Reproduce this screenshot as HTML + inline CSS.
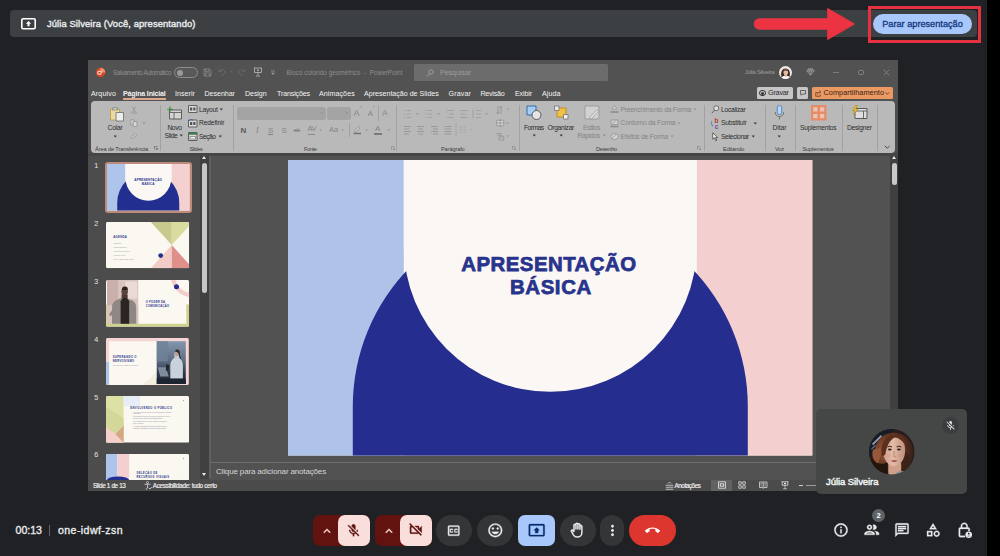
<!DOCTYPE html>
<html lang="pt-BR">
<head>
<meta charset="utf-8">
<title>Meet - apresentando</title>
<style>
*{box-sizing:border-box;margin:0;padding:0}
html,body{width:1000px;height:556px;overflow:hidden;background:#202124}
body{font-family:"Liberation Sans",sans-serif;color:#e8eaed;position:relative}
.abs{position:absolute}
#stage{position:absolute;left:0;top:0;width:1000px;height:556px;background:#202124;overflow:hidden}
svg{display:block;overflow:visible}
/* ---------- Meet top bar ---------- */
#topbar{left:10px;top:10px;width:967px;height:27px;background:#3c4043;border-radius:4px}
#topbar .ttl{left:37px;top:-.5px;height:27px;line-height:27px;font-size:9.4px;color:#e8eaed;white-space:nowrap;-webkit-text-stroke:.4px #e8eaed}
#stopbtn{left:873px;top:13.5px;width:98.5px;height:20.5px;border-radius:10.5px;background:#a8c7fa;color:#062e6f;font-size:9.2px;line-height:20.2px;white-space:nowrap;-webkit-text-stroke:.3px #12377c;color:#12377c}
#redbox{left:867.6px;top:6.4px;width:113.7px;height:37.1px;border:3.1px solid #e63141}
/* ---------- bottom bar ---------- */
.pill{position:absolute;top:514.5px;height:31.5px;background:#333537;border-radius:16px}
.pill svg{position:absolute;left:50%;top:50%}
.grp{position:absolute;top:514.5px;height:31.5px;background:#63130f;border-radius:7px}
.grp .on{position:absolute;right:0;top:0;height:31.5px;width:31.5px;background:#f9dedc;border-radius:7px}
#clock{left:15.6px;top:520px;height:20px;line-height:20px;font-size:10.6px;color:#e8eaed;white-space:nowrap;-webkit-text-stroke:.35px #e8eaed}
/* ---------- self tile ---------- */
#tile{left:815.5px;top:409px;width:151.5px;height:85px;background:#444746;border-radius:5px}
#tile .nm{left:10.5px;top:66.7px;font-size:9.5px;color:#f1f3f4;line-height:12px;white-space:nowrap;-webkit-text-stroke:.45px #f1f3f4}
/* ---------- PowerPoint window ---------- */
#ppt{left:88px;top:60px;width:810px;height:431px;background:#4d4d4d;overflow:hidden;font-family:"Liberation Sans",sans-serif}
.t{white-space:nowrap}
.tab{top:88.600px;font-size:7.100px;color:#f2f2f2;line-height:10px;white-space:nowrap}
.sep{top:104.500px;width:.8px;height:46px;background:#a2a2a2}
.r{font-size:6.700px;color:#2d2d2d;line-height:10px;white-space:nowrap}
.rd{font-size:6.700px;color:#858585;line-height:10px;white-space:nowrap}
.gl{top:144.600px;font-size:5.600px;color:#3c3c3c;line-height:8px;white-space:nowrap}
.lau{top:146px}
.tn{left:94.3px;font-size:7.2px;color:#e4e4e4;line-height:10px}
</style>
</head>
<body>
<div id="stage">

<!-- Meet top bar -->
<div id="topbar" class="abs">
  <svg class="abs" style="left:11.3px;top:8px" width="15" height="11.5" viewBox="0 0 30 23">
    <rect x="1.6" y="1.6" width="26.8" height="19.8" rx="2.5" fill="none" stroke="#fff" stroke-width="3.2"/>
    <path d="M15 6.2 L20.2 11.6 H17 V16.4 H13 V11.6 H9.8 Z" fill="#fff"/>
  </svg>
  <div class="abs ttl" style="letter-spacing:0.104px">Júlia Silveira (Você, apresentando)</div>
</div>

<!-- red arrow annotation -->
<svg class="abs" style="left:750px;top:5px" width="110" height="38" viewBox="0 0 110 38">
  <path d="M9.500 13.200H77.200V2.800L105.300 19 77.200 35.200V24.700H9.500A5.750 5.750 0 0 1 9.500 13.200Z" fill="#eb3342"/>
</svg>
<div id="redbox" class="abs"></div>
<div id="stopbtn" class="abs"><span class="abs" style="left:9.2px;top:0;letter-spacing:-0.006px">Parar apresentação</span></div>

<!-- POWERPOINT WINDOW -->
<div id="ppt" class="abs">
<div class="abs" id="pw" style="left:-88px;top:-60px;width:1000px;height:556px">
<!-- title bar -->
<div class="abs" style="left:88px;top:60px;width:810px;height:41px;background:#525252"></div>
<svg class="abs" style="left:94.5px;top:66.5px" width="11" height="11" viewBox="0 0 22 22"><circle cx="11" cy="11" r="9.5" fill="#d24726"/><path d="M11 1.500A9.500 9.500 0 0 1 20.500 11H11Z" fill="#ff8f6b"/><circle cx="9" cy="11.500" r="4.600" fill="#f4d8cf"/><circle cx="9" cy="11.500" r="2.200" fill="#c23b1c"/></svg>
<div class="abs t" style="left:113px;top:68px;font-size:6.3px;color:#8f8f8f;line-height:9px;letter-spacing:-0.388px">Salvamento Automático</div>
<div class="abs" style="left:174px;top:67px;width:23.5px;height:11px;border-radius:6px;border:1px solid #8c8c8c;background:#595959"></div>
<div class="abs" style="left:176.500px;top:69.500px;width:6px;height:6px;border-radius:50%;background:#9a9a9a"></div>
<!-- quick access icons -->
<svg class="abs" style="left:203px;top:67.500px" width="9" height="9" viewBox="0 0 18 18"><path d="M2 2h11l3 3v11H2z M5 2v5h7V2 M5 16v-6h8v6" fill="none" stroke="#8a8a8a" stroke-width="1.600"/></svg>
<svg class="abs" style="left:218px;top:68px" width="9" height="8" viewBox="0 0 18 16"><path d="M2 2v5h5 M2.500 7C5 3 12 2 14 7c1 4-3 7-7 7" fill="none" stroke="#6e6e6e" stroke-width="1.800"/></svg>
<div class="abs" style="left:229.500px;top:70.500px;width:0;height:0;border-left:1.500px solid transparent;border-right:1.500px solid transparent;border-top:2px solid #6e6e6e"></div>
<svg class="abs" style="left:237px;top:68px" width="9" height="8" viewBox="0 0 18 16"><path d="M16 2v5h-5 M15.500 7C13 3 6 2 4 7c-1 4 3 7 7 7" fill="none" stroke="#6a6a6a" stroke-width="1.800"/></svg>
<svg class="abs" style="left:252.500px;top:67px" width="10" height="10" viewBox="0 0 20 20"><path d="M2 2h16 M3 2v9h14V2 M10 11v5 M6 18h8 M10 4.500v4 M8 6.500h4" fill="none" stroke="#b5b5b5" stroke-width="1.700"/></svg>
<svg class="abs" style="left:269.500px;top:69.500px" width="6" height="6" viewBox="0 0 12 12"><path d="M2 2h8" stroke="#9a9a9a" stroke-width="1.600"/><path d="M2 5.500h8L6 10z" fill="#9a9a9a"/></svg>
<div class="abs t" style="left:286.500px;top:68px;font-size:6.300px;color:#8f8f8f;line-height:9px;letter-spacing:0.056px">Bloco colorido geométrico&nbsp; -&nbsp; PowerPoint</div>
<!-- search -->
<div class="abs" style="left:414px;top:64px;width:194px;height:17px;background:#6c6c6c;border-radius:1.500px"></div>
<svg class="abs" style="left:425.500px;top:68.500px" width="8" height="8" viewBox="0 0 16 16"><circle cx="10" cy="6" r="4.300" fill="none" stroke="#a9a9a9" stroke-width="1.500"/><path d="M7 9.500L1.500 15" stroke="#a9a9a9" stroke-width="1.700"/></svg>
<div class="abs t" style="left:440px;top:67.500px;font-size:7.200px;color:#9c9c9c;line-height:10px;letter-spacing:-0.108px">Pesquisar</div>
<!-- user -->
<div class="abs t" style="left:744.800px;top:68.200px;font-size:6.100px;color:#9c9c9c;line-height:8px;letter-spacing:-0.330px">Júlia Silveira</div>
<svg class="abs" style="left:779px;top:66px" width="13" height="13" viewBox="0 0 26 26"><defs><clipPath id="ta"><circle cx="13" cy="13" r="13"/></clipPath></defs><g clip-path="url(#ta)"><rect width="26" height="26" fill="#efeae6"/><path d="M5 22c-2-8 0-17 8-17s10 8 8 17z" fill="#3b2620"/><ellipse cx="13.500" cy="12.500" rx="4.600" ry="6" fill="#e3bba6"/><path d="M8 11c1-5 9-6 11 0-3-2-7-3-11 0z" fill="#3b2620"/><path d="M4 27c1-6 5-8 9.500-8s8.500 2 9.500 8z" fill="#f7f4f1"/><path d="M11 17h5v4h-5z" fill="#dcb29c"/></g></svg>
<svg class="abs" style="left:806px;top:68px" width="9" height="8" viewBox="0 0 18 16"><path d="M5 1.500h8l3.500 4.500L9 14.500 1.500 6z M1.500 6h15 M6.500 6L9 14 M11.500 6L9 14 M5 1.500L6.500 6 9 1.500 11.500 6 13 1.500" fill="none" stroke="#a9a9a9" stroke-width="1.300"/></svg>
<div class="abs" style="left:832.500px;top:72px;width:6px;height:1px;background:#7c7c7c"></div>
<div class="abs" style="left:858px;top:69.500px;width:5.500px;height:5.500px;border:1px solid #858585;border-radius:1.500px"></div>
<svg class="abs" style="left:882.500px;top:69px" width="7" height="7" viewBox="0 0 14 14"><path d="M1.500 1.500l11 11M12.500 1.500l-11 11" stroke="#8e8e8e" stroke-width="1.500"/></svg>
<!-- tabs -->
<div class="abs tab" style="left:91px;letter-spacing:0.134px">Arquivo</div>
<div class="abs tab" style="left:123px;font-weight:bold;letter-spacing:-0.196px">Página Inicial</div>
<div class="abs" style="left:123px;top:98.200px;width:43px;height:1.500px;background:#dba88f"></div>
<div class="abs tab" style="left:175px;letter-spacing:0.040px">Inserir</div>
<div class="abs tab" style="left:204.500px;letter-spacing:-0.046px">Desenhar</div>
<div class="abs tab" style="left:245px;letter-spacing:-0.082px">Design</div>
<div class="abs tab" style="left:277px;letter-spacing:-0.144px">Transições</div>
<div class="abs tab" style="left:319px;letter-spacing:0.078px">Animações</div>
<div class="abs tab" style="left:364px;letter-spacing:-0.006px">Apresentação de Slides</div>
<div class="abs tab" style="left:448.500px;letter-spacing:0.152px">Gravar</div>
<div class="abs tab" style="left:480.500px;letter-spacing:-0.249px">Revisão</div>
<div class="abs tab" style="left:515px;letter-spacing:-0.125px">Exibir</div>
<div class="abs tab" style="left:542px;letter-spacing:0.069px">Ajuda</div>
<!-- right buttons -->
<div class="abs" style="left:757px;top:87px;width:35.500px;height:12px;background:#c6c6c6;border-radius:1.500px"></div>
<div class="abs" style="left:759.200px;top:89.600px;width:6.800px;height:6.800px;border-radius:50%;border:.9px solid #333"></div>
<div class="abs" style="left:761.100px;top:91.500px;width:3px;height:3px;border-radius:50%;background:#333"></div>
<div class="abs t" style="left:768px;top:88px;font-size:7.300px;color:#2a2a2a;line-height:10px;letter-spacing:-0.252px">Gravar</div>
<div class="abs" style="left:797px;top:87px;width:11px;height:12px;background:#c6c6c6;border-radius:1.500px"></div>
<svg class="abs" style="left:799.500px;top:90px" width="6" height="6" viewBox="0 0 12 12"><path d="M1 1h10v7H5l-2.500 2.500V8H1z" fill="none" stroke="#333" stroke-width="1.300"/></svg>
<div class="abs" style="left:812px;top:87px;width:80.500px;height:12px;background:#ea9963;border-radius:1.500px"></div>
<svg class="abs" style="left:815px;top:89.500px" width="7" height="7" viewBox="0 0 14 14"><path d="M5 5H1.500v7.500h9V9 M5 9c0-3 2-5 6-5 M8.500 1.500L11.500 4 8.500 6.500" fill="none" stroke="#4a2a18" stroke-width="1.300"/></svg>
<div class="abs t" style="left:823.500px;top:88px;font-size:7.300px;color:#3a2214;line-height:10px;letter-spacing:0.055px">Compartilhamento</div>
<svg class="abs" style="left:885px;top:91.500px" width="4.500" height="3" viewBox="0 0 9 6"><path d="M1 1l3.500 3.500L8 1" fill="none" stroke="#4a2a18" stroke-width="1.400"/></svg>
<div class="abs" style="left:91px;top:101px;width:803.500px;height:52px;background:#b9b9b9;border-radius:4px"></div>
<!-- group separators -->
<div class="abs sep" style="left:159.500px"></div><div class="abs sep" style="left:232.500px"></div><div class="abs sep" style="left:396.200px"></div><div class="abs sep" style="left:518.500px"></div><div class="abs sep" style="left:703.500px"></div><div class="abs sep" style="left:764.500px"></div><div class="abs sep" style="left:794.500px"></div><div class="abs sep" style="left:841.500px"></div><div class="abs sep" style="left:877px"></div>
<!-- clipboard -->
<svg class="abs" style="left:108.500px;top:105.500px" width="16" height="16" viewBox="0 0 32 32"><path d="M3 6h18v22H3z" fill="#e9dba6" stroke="#b59a3c" stroke-width="1.600"/><path d="M8 3.500h8l1.500 4.500h-11z" fill="#d8d8d8" stroke="#6e6e6e" stroke-width="1.400"/><path d="M14 13h15v17H14z" fill="#ededed" stroke="#6a6a6a" stroke-width="1.600"/></svg>
<div class="abs r" style="left:107.600px;top:122.9px;letter-spacing:-0.237px">Colar</div>
<svg class="abs" style="left:113px;top:134.500px" width="4.500" height="3" viewBox="0 0 9 6"><path d="M1.200 1.200h6.600L4.500 5z" fill="#3a3a3a"/></svg>
<svg class="abs" style="left:130.500px;top:105.500px" width="6" height="8" viewBox="0 0 12 16"><path d="M2.500 1l6.500 11M9.500 1L3 12" stroke="#8d8d8d" stroke-width="1.300"/><circle cx="3" cy="13.500" r="1.800" fill="none" stroke="#8d8d8d" stroke-width="1.100"/><circle cx="9" cy="13.500" r="1.800" fill="none" stroke="#8d8d8d" stroke-width="1.100"/></svg>
<svg class="abs" style="left:130px;top:118.500px" width="8" height="8" viewBox="0 0 16 16"><path d="M1.500 1.500h7v10h-7z" fill="#cfcfcf" stroke="#8a8a8a" stroke-width="1.300"/><path d="M6.500 5h7.500v10H6.500z" fill="#d6d6d6" stroke="#8a8a8a" stroke-width="1.300"/></svg>
<svg class="abs" style="left:141.500px;top:122px" width="4" height="2.500" viewBox="0 0 8 5"><path d="M1 1h6L4 4.400z" fill="#8d8d8d"/></svg>
<svg class="abs" style="left:130px;top:132px" width="8" height="8" viewBox="0 0 16 16"><path d="M9 2l5 4-4 3-4-4z M6 6l-4.500 6 2.500 2 5-5" fill="#c8c8c8" stroke="#919191" stroke-width="1.300"/></svg>
<div class="abs gl" style="left:95px;letter-spacing:-0.097px">Área de Transferência</div>
<svg class="abs lau" style="left:153.500px"  width="4" height="4" viewBox="0 0 8 8"><path d="M1 7V1h6 M3.500 3.500L7 7 M7 4v3H4" fill="none" stroke="#555" stroke-width="1.100"/></svg>
<!-- slides -->
<svg class="abs" style="left:166.500px;top:105.500px" width="16" height="14" viewBox="0 0 32 28"><path d="M5 8h24v18H5z" fill="#d4d4d4" stroke="#5f5f5f" stroke-width="2"/><path d="M5 13h24 M14 13v13" stroke="#5f5f5f" stroke-width="1.800"/><path d="M6 1v11 M.5 6.500h11" stroke="#2f8a3a" stroke-width="2"/></svg>
<div class="abs r" style="left:167.400px;top:122.9px;letter-spacing:-0.356px">Novo</div>
<div class="abs r" style="left:164.600px;top:130.8px;letter-spacing:-0.415px">Slide</div>
<svg class="abs" style="left:179px;top:134px" width="4.500" height="3" viewBox="0 0 9 6"><path d="M1.200 1.200h6.600L4.500 5z" fill="#3a3a3a"/></svg>
<svg class="abs" style="left:188px;top:105px" width="9.500" height="8" viewBox="0 0 19 16"><path d="M1 1h17v14H1z" fill="#dcdcdc" stroke="#555" stroke-width="1.800"/><path d="M4 5h4.500v6H4z M10.500 5H15v6h-4.500z" fill="#555"/></svg>
<div class="abs r" style="left:199px;top:105.1px;letter-spacing:-0.249px">Layout</div>
<svg class="abs" style="left:219px;top:108px" width="4.500" height="3" viewBox="0 0 9 6"><path d="M1.200 1.200h6.600L4.500 5z" fill="#3a3a3a"/></svg>
<svg class="abs" style="left:188px;top:118.500px" width="9.500" height="8.500" viewBox="0 0 19 17"><path d="M1 2h17v14H1z" fill="#dcdcdc" stroke="#555" stroke-width="1.800"/><path d="M4 6h4.500v6H4z M10.500 6H15v6h-4.500z" fill="#555"/><path d="M1 5C3 1 8 0 10 3" fill="none" stroke="#2a62a8" stroke-width="1.800"/></svg>
<div class="abs r" style="left:199px;top:118.4px;letter-spacing:-0.152px">Redefinir</div>
<svg class="abs" style="left:188px;top:131.500px" width="9.500" height="9" viewBox="0 0 19 18"><path d="M1 1h17v16H1z" fill="#dcdcdc" stroke="#4f4f4f" stroke-width="1.800"/><path d="M1 1h17v4.500H1z" fill="#3f7d4a"/><path d="M4 9h11v5H4z" fill="#f4f4f4" stroke="#555" stroke-width="1.200"/></svg>
<div class="abs r" style="left:199px;top:131.9px;letter-spacing:-0.514px">Seção</div>
<svg class="abs" style="left:217.500px;top:134.500px" width="4.500" height="3" viewBox="0 0 9 6"><path d="M1.200 1.200h6.600L4.500 5z" fill="#3a3a3a"/></svg>
<div class="abs gl" style="left:189.400px;letter-spacing:-0.342px">Slides</div>
<!-- font -->
<div class="abs" style="left:237px;top:107px;width:88.500px;height:12.500px;background:#a4a4a4;border-radius:2.500px"></div>
<div class="abs" style="left:327px;top:107px;width:23.500px;height:12.500px;background:#a4a4a4;border-radius:2.500px"></div>
<svg class="abs" style="left:320px;top:112px" width="3.500" height="2.500" viewBox="0 0 7 5"><path d="M.8 1h5.400L3.500 4.200z" fill="#8e8e8e"/></svg>
<svg class="abs" style="left:345px;top:112px" width="3.500" height="2.500" viewBox="0 0 7 5"><path d="M.8 1h5.400L3.500 4.200z" fill="#8e8e8e"/></svg>
<div class="abs rd" style="left:353.500px;top:107.500px;font-size:9px;line-height:11px">A</div><div class="abs rd" style="left:359.800px;top:105.500px;font-size:4.500px;line-height:6px">^</div>
<div class="abs rd" style="left:367.800px;top:108.500px;font-size:7.800px;line-height:10px">A</div><div class="abs rd" style="left:373px;top:106px;font-size:4.500px;line-height:6px">ˇ</div>
<div class="abs" style="left:378.200px;top:106px;width:.8px;height:15px;background:#a0a0a0"></div>
<div class="abs rd" style="left:382px;top:107.500px;font-size:8.500px;line-height:11px">A</div><svg class="abs" style="left:386px;top:113px" width="4" height="4" viewBox="0 0 8 8"><path d="M1 5l4-4 2.500 2.500-4 4z" fill="#d0d0d0" stroke="#8a8a8a" stroke-width="1"/></svg>
<div class="abs" style="left:240.500px;top:124.500px;font-size:8px;font-weight:bold;color:#5a5a5a;line-height:11px">N</div>
<div class="abs rd" style="left:256px;top:124.500px;font-size:8px;font-style:italic;font-family:'Liberation Serif',serif;line-height:11px">I</div>
<div class="abs rd" style="left:268px;top:124.500px;font-size:8px;text-decoration:underline;line-height:11px">S</div>
<div class="abs rd" style="left:281.500px;top:124.500px;font-size:8px;line-height:11px">S</div>
<div class="abs rd" style="left:293.500px;top:126px;font-size:6px;text-decoration:line-through;line-height:9px">ab</div>
<div class="abs rd" style="left:307.500px;top:124px;font-size:7.500px;line-height:10px;letter-spacing:-.5px">AV</div><div class="abs" style="left:308px;top:134px;width:7px;height:.8px;background:#8a8a8a"></div>
<svg class="abs" style="left:318.500px;top:129px" width="3.500" height="2.500" viewBox="0 0 7 5"><path d="M.8 1h5.400L3.500 4.200z" fill="#8e8e8e"/></svg>
<div class="abs rd" style="left:329px;top:125px;font-size:7.500px;line-height:10px">Aa</div>
<svg class="abs" style="left:340.500px;top:129px" width="3.500" height="2.500" viewBox="0 0 7 5"><path d="M.8 1h5.400L3.500 4.200z" fill="#8e8e8e"/></svg>
<div class="abs" style="left:349.200px;top:123px;width:.8px;height:14px;background:#a0a0a0"></div>
<svg class="abs" style="left:352.500px;top:124.500px" width="8.500" height="9.500" viewBox="0 0 17 19"><path d="M4 11l7-8 3 2.500-7 8-3.500.5z" fill="#cfcfcf" stroke="#7e7e7e" stroke-width="1.300"/><path d="M1 17h15" stroke="#6e6e6e" stroke-width="2.600"/></svg>
<svg class="abs" style="left:364.500px;top:129px" width="3.500" height="2.500" viewBox="0 0 7 5"><path d="M.8 1h5.400L3.500 4.200z" fill="#8e8e8e"/></svg>
<div class="abs rd" style="left:375px;top:123.500px;font-size:8px;line-height:10px">A</div><div class="abs" style="left:373.500px;top:133px;width:8.500px;height:1.600px;background:#7a7a7a"></div>
<svg class="abs" style="left:386.500px;top:129px" width="3.500" height="2.500" viewBox="0 0 7 5"><path d="M.8 1h5.400L3.500 4.200z" fill="#8e8e8e"/></svg>
<div class="abs gl" style="left:304px;letter-spacing:-0.343px">Fonte</div>
<svg class="abs lau" style="left:390.500px" width="4" height="4" viewBox="0 0 8 8"><path d="M1 7V1h6 M3.500 3.500L7 7 M7 4v3H4" fill="none" stroke="#7a7a7a" stroke-width="1.100"/></svg>
<!-- paragraph -->
<svg class="abs" style="left:403px;top:108.500px" width="90" height="10" viewBox="0 0 180 20">
 <g stroke="#9a9a9a" stroke-width="1.500" fill="none"><path d="M2 3h2M7 3h9M2 10h2M7 10h9M2 17h2M7 17h9"/><path d="M44 3h2M49 3h9M44 10h2M49 10h9M44 17h2M49 17h9"/><path d="M88 3h14M92 10h10M88 17h14"/><path d="M115 3h14M115 10h10M115 17h14"/><path d="M140 1v18M146 3h10M146 10h10M146 17h10"/></g>
 <g stroke="#8e8e8e" stroke-width="1.400" fill="none"><path d="M26 8l3 3 3-3M68 8l3 3 3-3M164 8l3 3 3-3"/></g>
</svg>
<svg class="abs" style="left:403px;top:125px" width="75" height="10" viewBox="0 0 150 20">
 <g stroke="#8f8f8f" stroke-width="1.500" fill="none"><path d="M2 3h14M2 8h10M2 13h14M2 18h10"/><path d="M28 3h14M30 8h10M28 13h14M30 18h10"/><path d="M56 3h14M60 8h10M56 13h14M60 18h10"/><path d="M83 3h14M83 8h14M83 13h14M83 18h14"/></g>
 <path d="M106 -4v28" stroke="#9a9a9a" stroke-width="1.300"/>
 <g stroke="#a3a3a3" stroke-width="1.400" fill="none"><path d="M113 4h5M113 9h5M113 14h5M121 4h5M121 9h5M121 14h5"/><path d="M133 8l3 3 3-3"/></g>
</svg>
<svg class="abs" style="left:496px;top:104.500px" width="7" height="10" viewBox="0 0 14 20"><path d="M4 2v15M1.500 14L4 17.500 6.500 14 M10 18V3 M7.500 6L10 2.500 12.500 6" fill="none" stroke="#8a8a8a" stroke-width="1.400"/></svg>
<svg class="abs" style="left:495.500px;top:119px" width="8.500" height="8" viewBox="0 0 17 16"><path d="M1.500 2.500h14v11h-14z M8.500 0v16 M1.500 8h14" fill="#d2d2d2" stroke="#8a8a8a" stroke-width="1.400"/></svg>
<svg class="abs" style="left:495.500px;top:131.500px" width="8.500" height="8.500" viewBox="0 0 17 17"><path d="M1 3h8l2 2M3 6.500h8l2 2 M6 9.500h9.500v6.500H6z" fill="none" stroke="#8a8a8a" stroke-width="1.400"/></svg>
<svg class="abs" style="left:506px;top:108px" width="3.500" height="2.500" viewBox="0 0 7 5"><path d="M.8 1h5.400L3.500 4.200z" fill="#8e8e8e"/></svg>
<svg class="abs" style="left:506px;top:122px" width="3.500" height="2.500" viewBox="0 0 7 5"><path d="M.8 1h5.400L3.500 4.200z" fill="#8e8e8e"/></svg>
<svg class="abs" style="left:506px;top:135px" width="3.500" height="2.500" viewBox="0 0 7 5"><path d="M.8 1h5.400L3.500 4.200z" fill="#8e8e8e"/></svg>
<div class="abs gl" style="left:441px;letter-spacing:-0.109px">Parágrafo</div>
<svg class="abs lau" style="left:512px" width="4" height="4" viewBox="0 0 8 8"><path d="M1 7V1h6 M3.500 3.500L7 7 M7 4v3H4" fill="none" stroke="#7a7a7a" stroke-width="1.100"/></svg>
<!-- drawing -->
<svg class="abs" style="left:525.500px;top:105px" width="16" height="16" viewBox="0 0 32 32"><path d="M2 2h18v18H2z" fill="#a9cdf2" stroke="#2f6fb5" stroke-width="2"/><circle cx="21" cy="20" r="9" fill="#e4e4e4" stroke="#5a5a5a" stroke-width="2"/></svg>
<div class="abs r" style="left:524px;top:122.9px;letter-spacing:-0.512px">Formas</div>
<svg class="abs" style="left:531.500px;top:134px" width="4.500" height="3" viewBox="0 0 9 6"><path d="M1.200 1.200h6.600L4.500 5z" fill="#3a3a3a"/></svg>
<svg class="abs" style="left:552.500px;top:105px" width="16" height="16" viewBox="0 0 32 32"><path d="M8 6h18v18H8z" fill="#f2c14a" stroke="#c08d1a" stroke-width="2"/><path d="M3 2h9v9H3z" fill="#eaeaea" stroke="#7b7b7b" stroke-width="1.800"/><path d="M21 19h9v9h-9z" fill="#f2f2f2" stroke="#7b7b7b" stroke-width="1.800"/></svg>
<div class="abs r" style="left:547.400px;top:122.9px;letter-spacing:-0.308px">Organizar</div>
<svg class="abs" style="left:558.500px;top:134px" width="4.500" height="3" viewBox="0 0 9 6"><path d="M1.200 1.200h6.600L4.500 5z" fill="#3a3a3a"/></svg>
<svg class="abs" style="left:583.500px;top:105px" width="17" height="16" viewBox="0 0 34 32"><path d="M2 2h28v26H2z" fill="#d2d2d2" stroke="#9d9d9d" stroke-width="2"/><path d="M12 24l14-15 3 3-14 15-4 1z" fill="#e6e6e6" stroke="#9a9a9a" stroke-width="1.600"/></svg>
<div class="abs rd" style="left:583px;top:122.9px;letter-spacing:-0.386px">Estilos</div>
<div class="abs rd" style="left:577.600px;top:130.8px;letter-spacing:-0.307px">Rápidos</div>
<svg class="abs" style="left:601.500px;top:134px" width="4.500" height="3" viewBox="0 0 9 6"><path d="M1.200 1.200h6.600L4.500 5z" fill="#8e8e8e"/></svg>
<svg class="abs" style="left:610px;top:105px" width="9" height="9" viewBox="0 0 18 18"><path d="M9 1l5 7H4z" fill="#d6d6d6" stroke="#8a8a8a" stroke-width="1.300"/><path d="M1 14h16" stroke="#8a8a8a" stroke-width="3"/></svg>
<div class="abs rd" style="left:620.600px;top:105.1px;letter-spacing:-0.230px">Preenchimento da Forma</div>
<svg class="abs" style="left:692.500px;top:108px" width="4" height="2.800" viewBox="0 0 8 5.600"><path d="M1 1h6L4 4.600z" fill="#8e8e8e"/></svg>
<svg class="abs" style="left:610px;top:118.500px" width="9" height="9" viewBox="0 0 18 18"><path d="M2 2h14v9H2z" fill="#d0d0d0" stroke="#8a8a8a" stroke-width="1.400"/><path d="M5 9l6-5" stroke="#8a8a8a" stroke-width="1.300"/><path d="M1 15h16" stroke="#8a8a8a" stroke-width="3"/></svg>
<div class="abs rd" style="left:620.600px;top:118.4px;letter-spacing:-0.188px">Contorno da Forma</div>
<svg class="abs" style="left:676.500px;top:121.500px" width="4" height="2.800" viewBox="0 0 8 5.600"><path d="M1 1h6L4 4.600z" fill="#8e8e8e"/></svg>
<svg class="abs" style="left:610px;top:131.500px" width="9" height="9" viewBox="0 0 18 18"><ellipse cx="9" cy="9" rx="7.500" ry="6" fill="#d2d2d2" stroke="#8a8a8a" stroke-width="1.400"/><path d="M4 12l8-7" stroke="#8a8a8a" stroke-width="1.300"/></svg>
<div class="abs rd" style="left:620.600px;top:131.9px;letter-spacing:-0.220px">Efeitos de Forma</div>
<svg class="abs" style="left:669.500px;top:134.500px" width="4" height="2.800" viewBox="0 0 8 5.600"><path d="M1 1h6L4 4.600z" fill="#8e8e8e"/></svg>
<div class="abs gl" style="left:596px;letter-spacing:-0.201px">Desenho</div>
<svg class="abs lau" style="left:697px" width="4" height="4" viewBox="0 0 8 8"><path d="M1 7V1h6 M3.500 3.500L7 7 M7 4v3H4" fill="none" stroke="#7a7a7a" stroke-width="1.100"/></svg>
<!-- editing -->
<svg class="abs" style="left:710.500px;top:105px" width="8.500" height="9" viewBox="0 0 17 18"><circle cx="10.500" cy="6.500" r="5" fill="#e0e0e0" stroke="#4a4a4a" stroke-width="1.500"/><path d="M7 10.500L1.500 16.500" stroke="#7a4a9a" stroke-width="2"/></svg>
<div class="abs r" style="left:721px;top:105.1px;letter-spacing:-0.263px">Localizar</div>
<svg class="abs" style="left:710px;top:118px" width="9.500" height="10" viewBox="0 0 19 20"><path d="M4 6C2 9 2 13 5 15.500" fill="none" stroke="#3a72b8" stroke-width="1.600"/><path d="M3 16.500l3.500-.5-1-3z" fill="#3a72b8"/></svg>
<div class="abs" style="left:714.500px;top:116.500px;font-size:6.500px;line-height:7px;color:#c0392b;font-weight:bold">b</div>
<div class="abs" style="left:714.800px;top:122.800px;font-size:6.500px;line-height:7px;color:#7a4a9a;font-weight:bold">c</div>
<div class="abs r" style="left:721px;top:118.4px;letter-spacing:-0.229px">Substituir</div>
<svg class="abs" style="left:753px;top:121.500px" width="4.500" height="3" viewBox="0 0 9 6"><path d="M1.200 1.200h6.600L4.500 5z" fill="#3a3a3a"/></svg>
<svg class="abs" style="left:711.500px;top:131.500px" width="6.500" height="9.500" viewBox="0 0 13 19"><path d="M1.500 1.500v13l3.500-3 2.500 6 2-1-2.500-5.500h4.500z" fill="#f0f0f0" stroke="#3f3f3f" stroke-width="1.500"/></svg>
<div class="abs r" style="left:721px;top:131.9px;letter-spacing:-0.361px">Selecionar</div>
<svg class="abs" style="left:751px;top:134.500px" width="4.500" height="3" viewBox="0 0 9 6"><path d="M1.200 1.200h6.600L4.500 5z" fill="#3a3a3a"/></svg>
<div class="abs gl" style="left:723px;letter-spacing:-0.087px">Editando</div>
<!-- voice -->
<svg class="abs" style="left:774px;top:105px" width="11" height="16" viewBox="0 0 22 32"><rect x="6.500" y="1" width="9" height="18" rx="4.500" fill="#b5d5f5" stroke="#3f79bd" stroke-width="1.600"/><path d="M2.500 14c0 6 3.500 9 8.500 9s8.500-3 8.500-9 M11 23v6" fill="none" stroke="#6d6d6d" stroke-width="1.800"/></svg>
<div class="abs r" style="left:772.600px;top:122.9px;letter-spacing:-0.085px">Ditar</div>
<svg class="abs" style="left:777.300px;top:134.500px" width="4.500" height="3" viewBox="0 0 9 6"><path d="M1.200 1.200h6.600L4.500 5z" fill="#3a3a3a"/></svg>
<div class="abs gl" style="left:775px;letter-spacing:-0.115px">Voz</div>
<!-- add-ins -->
<svg class="abs" style="left:810.500px;top:105px" width="15.500" height="15.500" viewBox="0 0 31 31"><rect x="0" y="0" width="31" height="31" fill="#e58d69"/><rect x="4.500" y="4.500" width="8.500" height="8.500" fill="#ecc4b3"/><rect x="18" y="4.500" width="8.500" height="8.500" fill="#ecc4b3"/><rect x="4.500" y="18" width="8.500" height="8.500" fill="#ecc4b3"/><rect x="18" y="18" width="8.500" height="8.500" fill="#ecc4b3"/></svg>
<div class="abs r" style="left:800px;top:122.9px;letter-spacing:-0.241px">Suplementos</div>
<div class="abs gl" style="left:802.500px;letter-spacing:-0.123px">Suplementos</div>
<!-- designer -->
<svg class="abs" style="left:850.500px;top:104.500px" width="17" height="16" viewBox="0 0 34 32"><path d="M8 7h24v20H8z" fill="#dedede" stroke="#5a5a5a" stroke-width="2"/><path d="M8 12h24 M25 12v15" stroke="#5a5a5a" stroke-width="1.800"/><path d="M9 1l-6 10h5l-3 9 9-12H9l4-7z" fill="#f0c63c" stroke="#a88512" stroke-width="1.200"/></svg>
<div class="abs r" style="left:846.900px;top:122.9px;letter-spacing:-0.246px">Designer</div>
<svg class="abs" style="left:883.500px;top:144.500px" width="6.500" height="4" viewBox="0 0 13 8"><path d="M1.500 1.500l5 5 5-5" fill="none" stroke="#3a3a3a" stroke-width="1.700"/></svg>

<!-- body backgrounds -->
<div class="abs" style="left:88px;top:153px;width:810px;height:339px;background:#4c4c4c"></div><div class="abs" style="left:200.400px;top:155.500px;width:8.600px;height:323.800px;background:#404040"></div>
<div class="abs" style="left:88px;top:153px;width:810px;height:2.500px;background:#454545"></div><div class="abs" style="left:210px;top:155.500px;width:688px;height:306.500px;background:#525253"></div>
<div class="abs" style="left:209px;top:155.500px;width:1.800px;height:323.800px;background:#606060"></div>
<!-- slide panel scrollbar -->
<div class="abs" style="left:201.900px;top:162.500px;width:5px;height:130.500px;background:#c6c6c6;border-radius:2.500px"></div>
<div class="abs" style="left:201.600px;top:156.300px;width:0;height:0;border-left:2.800px solid transparent;border-right:2.800px solid transparent;border-bottom:3.900px solid #ececec"></div>
<div class="abs" style="left:201.600px;top:473px;width:0;height:0;border-left:2.800px solid transparent;border-right:2.800px solid transparent;border-top:3.900px solid #ececec"></div>
<!-- thumbnail numbers -->
<div class="abs tn" style="top:161px">1</div><div class="abs tn" style="top:219px">2</div><div class="abs tn" style="top:277px">3</div><div class="abs tn" style="top:334.500px">4</div><div class="abs tn" style="top:392.500px">5</div><div class="abs tn" style="top:450px">6</div>
<!-- thumb 1 -->
<div class="abs" style="left:104.500px;top:161.900px;width:87px;height:51px;border:1.300px solid #bd8b7c;border-radius:2.500px;background:#bd8b7c"></div>
<svg class="abs" style="left:106.900px;top:164.200px" width="82.500" height="46.600" viewBox="0 0 524 296" preserveAspectRatio="none"><rect width="524" height="296" fill="#fbf7f4"/><rect width="117" height="296" fill="#afc4ea"/><rect x="409" width="115" height="296" fill="#f4d0d0"/><path d="M65 296V246a197 197 0 0 1 394 0V296z" fill="#232f90"/><path d="M117 0h292v87a146 146 0 0 1-292 0z" fill="#fbf7f4"/><text x="262" y="109" font-family="Liberation Sans,sans-serif" font-weight="bold" font-size="20" fill="#28348c" text-anchor="middle" letter-spacing="1">APRESENTAÇÃO</text><text x="262" y="135" font-family="Liberation Sans,sans-serif" font-weight="bold" font-size="20" fill="#28348c" text-anchor="middle" letter-spacing="1">BÁSICA</text></svg>
<!-- thumb 2 -->
<svg class="abs" style="left:106.300px;top:222.300px" width="83.100" height="46.200" viewBox="0 0 165 93" preserveAspectRatio="none"><defs><clipPath id="c2"><rect width="165" height="93" rx="3"/></clipPath></defs><g clip-path="url(#c2)"><rect width="165" height="93" fill="#fbf8f2"/><path d="M89 0h41.500v46.500z" fill="#c8c98c"/><path d="M130.500 0H172l-41.500 46.500z" fill="#d9dc9e"/><path d="M130.500 46.500V93H89z" fill="#f3cbc7"/><path d="M130.500 46.500L172 93h-41.500z" fill="#e0908b"/><circle cx="108.600" cy="67.500" r="4.800" fill="#232f90"/><text x="14.500" y="33" font-family="Liberation Sans,sans-serif" font-weight="bold" font-size="5.600" fill="#28348c" letter-spacing=".5">AGENDA</text><g font-family="Liberation Serif,serif" font-size="3.600" fill="#8a8a98"><text x="14.500" y="44">Introdução</text><text x="14.500" y="52">Criando confiança</text><text x="14.500" y="60">Envolvendo o público</text><text x="14.500" y="68">Recursos visuais</text><text x="14.500" y="76">Dicas e considerações finais</text></g></g></svg>
<!-- thumb 3 -->
<svg class="abs" style="left:106.300px;top:279.700px" width="83.100" height="46.800" viewBox="0 0 165 93" preserveAspectRatio="none"><defs><clipPath id="c3"><rect width="165" height="93" rx="3"/></clipPath></defs><g clip-path="url(#c3)"><rect width="165" height="93" fill="#fbf8f2"/><path d="M0 48.500h165V93H0z" fill="#cfd28f"/><path d="M64 0h95.500v86.700H64z" fill="#fbf8f2"/><circle cx="171" cy="-8" r="38" fill="none" stroke="#f3cdcb" stroke-width="8.500"/><circle cx="140" cy="13.500" r="5" fill="#232f90"/><rect x="2" y="0" width="62" height="86.700" fill="#d9c4be"/><rect x="2" y="0" width="22" height="50" fill="#c9b0aa"/><rect x="38" y="3" width="24" height="34" fill="#eadbd6"/><path d="M12 86.700V54c0-8 5-13 12-15l7-4h9l7 4c8 2 13 7 13 16v31.700z" fill="#8f8783"/><path d="M12 60l-6 8 3 4 8-6z" fill="#8f8783"/><path d="M29 86.700V42l5-7h7l5 7v44.700z" fill="#2b2422"/><ellipse cx="37" cy="23" rx="6.500" ry="8" fill="#5a443b"/><path d="M31 29h12v7H31z" fill="#4d3a33"/><path d="M32 16c2-4 9-4 11 0v4H32z" fill="#2a2220"/><text x="78.800" y="45.500" font-family="Liberation Sans,sans-serif" font-weight="bold" font-size="5.400" fill="#28348c" letter-spacing=".5">O PODER DA</text><text x="78.800" y="54" font-family="Liberation Sans,sans-serif" font-weight="bold" font-size="5.400" fill="#28348c" letter-spacing=".5">COMUNICAÇÃO</text></g></svg>
<!-- thumb 4 -->
<svg class="abs" style="left:106.300px;top:337.700px" width="82.900" height="47" viewBox="0 0 165 93" preserveAspectRatio="none"><defs><clipPath id="c4"><rect width="165" height="93" rx="3"/></clipPath><linearGradient id="p4" x1="0" y1="0" x2="0" y2="1"><stop offset="0" stop-color="#8496ad"/><stop offset=".45" stop-color="#5d6e84"/><stop offset=".75" stop-color="#2c3847"/><stop offset="1" stop-color="#1f2835"/></linearGradient></defs><g clip-path="url(#c4)"><rect width="165" height="93" fill="#f6d6d5"/><rect x="0" y="47.500" width="6.200" height="45.500" fill="#afc4ea"/><path d="M6.200 6.300h95v86.700h-95z" fill="#fbf8f2"/><path d="M72 93l29-26v26z" fill="#f3eedd"/><rect x="101" y="6.300" width="57.800" height="84.700" fill="url(#p4)"/><rect x="101" y="6.300" width="22" height="40" fill="#6f8299" opacity=".8"/><path d="M128 91V55c0-8 4-14 9-16-2-4-2-11 4-12 6 0 7 8 4 12 5 2 8 8 8 16v36z" fill="#c9d1da"/><ellipse cx="140.500" cy="31" rx="4.300" ry="5.300" fill="#b9a194"/><path d="M137 26c3-5 10-4 10 3 0 6 2 10 3 14-4-3-5-9-6-13-2-2-4-3-7-4z" fill="#2f2a2c"/><path d="M103 58h16l6 18h-17z" fill="#7f8c9c"/><path d="M120 52l6 2-2 12-5-2z" fill="#20242b"/><rect x="101" y="80" width="57.800" height="11" fill="#1c2430"/><text x="13.400" y="39.500" font-family="Liberation Sans,sans-serif" font-weight="bold" font-size="5.400" fill="#28348c" letter-spacing=".7">SUPERANDO O</text><text x="13.400" y="47" font-family="Liberation Sans,sans-serif" font-weight="bold" font-size="5.400" fill="#28348c" letter-spacing=".7">NERVOSISMO</text><text x="13.400" y="56" font-family="Liberation Serif,serif" font-size="3.300" fill="#8a8a96">Estratégias para transmitir a confiança</text></g></svg>
<!-- thumb 5 -->
<svg class="abs" style="left:106.300px;top:395.800px" width="83.100" height="46.700" viewBox="0 0 165 93" preserveAspectRatio="none"><defs><clipPath id="c5"><rect width="165" height="93" rx="3"/></clipPath></defs><g clip-path="url(#c5)"><rect width="165" height="93" fill="#fbf8f2"/><path d="M0 0h35v93H0z" fill="#dde1a6"/><path d="M0 22l35 22v18H0z" fill="#d3d898"/><path d="M35 0h33v19.800H35z" fill="#e6edf6"/><path d="M0 62.500h35V93H0z" fill="#f4cfcb"/><path d="M35 59L18.700 75.800 35 93z" fill="#d4a882"/><path d="M0 62.500L18.700 75.800 35 59v-2L18 62.500z" fill="#d3d898"/><text x="48.300" y="26" font-family="Liberation Sans,sans-serif" font-weight="bold" font-size="5.400" fill="#28348c" letter-spacing=".75">ENVOLVENDO O PÚBLICO</text><g font-family="Liberation Serif,serif" font-size="2.600" fill="#77778a"><text x="53" y="33">• Faça contato visual com o público para criar uma sensação de intimidade</text><text x="53" y="36.500">  e envolvimento</text><text x="53" y="42.500">• Entrelaçamento de anedotas em sua narrativa para estabelecer relações</text><text x="53" y="46">  e capturar a atenção, tornando sua mensagem memorável</text><text x="53" y="52">• Fazer perguntas provoca o interesse e estimula a participação do</text><text x="53" y="55.500">  público e a interação</text><text x="53" y="61.500">• As perguntas encorajam a discussão aberta, gerando curiosidade,</text><text x="53" y="65">  pensamento e transformam o envolvimento para uma discussão</text></g><circle cx="154" cy="9" r="1.300" fill="#aaa"/></g></svg>
<!-- thumb 6 -->
<svg class="abs" style="left:106.300px;top:453.600px" width="83.100" height="25.700" viewBox="0 0 165 51.400" preserveAspectRatio="none"><defs><clipPath id="c6"><path d="M0 52V3a3 3 0 0 1 3-3h159a3 3 0 0 1 3 3v49z"/></clipPath></defs><g clip-path="url(#c6)"><rect width="165" height="52" fill="#fbf8f2"/><rect width="22.500" height="52" fill="#afc4ea"/><rect x="22.500" width="23.500" height="52" fill="#f4cfcf"/><path d="M2 52a22 7 0 0 1 44 0z" fill="#232f90"/><text x="60.500" y="39.500" font-family="Liberation Sans,sans-serif" font-weight="bold" font-size="5.400" fill="#28348c" letter-spacing=".75">SELEÇÃO DE</text><text x="60.500" y="48" font-family="Liberation Sans,sans-serif" font-weight="bold" font-size="5.400" fill="#28348c" letter-spacing=".75">RECURSOS VISUAIS</text><circle cx="154" cy="9" r="1.300" fill="#aaa"/></g></svg>
<!-- main slide -->
<svg class="abs" style="left:288.200px;top:159.800px" width="524.300" height="295.500" viewBox="0 0 524.300 295.500"><rect width="524.300" height="295.500" fill="#fbf7f4"/><rect width="115.800" height="295.500" fill="#afc3e9"/><rect x="408.800" width="115.500" height="295.500" fill="#f3cfcf"/><path d="M64.800 295.500V246.200a197.500 197.500 0 0 1 395 0V295.500z" fill="#252d8f"/><path d="M115.800 0h293v85.400a146.500 146.500 0 0 1-293 0z" fill="#fbf7f4"/></svg>
<div class="abs" style="left:461.300px;top:251.600px;font-size:20.400px;font-weight:bold;color:#28348c;line-height:25px;white-space:nowrap;-webkit-text-stroke:.75px #28348c;letter-spacing:0.470px">APRESENTAÇÃO</div>
<div class="abs" style="left:510px;top:274.500px;font-size:20.400px;font-weight:bold;color:#28348c;line-height:25px;white-space:nowrap;-webkit-text-stroke:.75px #28348c;letter-spacing:0.605px">BÁSICA</div>
<!-- right scrollbar of editing area -->
<div class="abs" style="left:890px;top:155.500px;width:8px;height:306.500px;background:#404041"></div>
<div class="abs" style="left:892px;top:163px;width:5px;height:22px;background:#c8c8c8;border-radius:2.500px"></div>
<div class="abs" style="left:891.700px;top:156.200px;width:0;height:0;border-left:2.800px solid transparent;border-right:2.800px solid transparent;border-bottom:3.900px solid #ececec"></div>
<!-- notes -->
<div class="abs" style="left:210px;top:462px;width:688px;height:.9px;background:#6f6f6f"></div>
<div class="abs" style="left:210.800px;top:463px;width:687.200px;height:16.500px;background:#525252"></div>
<div class="abs t" style="left:216px;top:465.500px;font-size:8px;color:#d6d6d6;line-height:11px;letter-spacing:-0.153px">Clique para adicionar anotações</div>
<!-- status bar -->
<div class="abs" style="left:88px;top:479.600px;width:810px;height:11.400px;background:#4b4b4b"></div>
<div class="abs t" style="left:93px;top:481.500px;font-size:6.300px;color:#f4f4f4;line-height:8px;-webkit-text-stroke:.15px #f4f4f4;letter-spacing:-0.328px">Slide 1 de 13</div>
<svg class="abs" style="left:143.500px;top:480.600px" width="8" height="9" viewBox="0 0 16 18"><circle cx="7" cy="3" r="2" fill="none" stroke="#e2e2e2" stroke-width="1.400"/><path d="M1 6.500h12 M7 6.500v6 M7 12.500l-3 5 M7 12.500l1.500 2" fill="none" stroke="#e2e2e2" stroke-width="1.500"/><path d="M10 14l2 2 3.500-4" fill="none" stroke="#e2e2e2" stroke-width="1.500"/></svg>
<div class="abs t" style="left:152.800px;top:481.500px;font-size:6.300px;color:#f4f4f4;line-height:8px;-webkit-text-stroke:.15px #f4f4f4;letter-spacing:-0.299px">Acessibilidade: tudo certo</div>
<svg class="abs" style="left:665px;top:480.600px" width="9" height="9" viewBox="0 0 18 18"><path d="M6 5l3-3 3 3 M1.500 8.500h15 M1.500 12.500h15 M1.500 16.500h15" fill="none" stroke="#e4e4e4" stroke-width="1.500"/></svg>
<div class="abs t" style="left:674.500px;top:481.500px;font-size:6.300px;color:#f4f4f4;line-height:8px;-webkit-text-stroke:.15px #f4f4f4;letter-spacing:-0.418px">Anotações</div>
<div class="abs" style="left:711.200px;top:479.500px;width:21.200px;height:11.500px;background:#626262"></div>
<svg class="abs" style="left:717.500px;top:481.300px" width="8" height="8" viewBox="0 0 16 16"><path d="M1 1.500h14v13H1z" fill="none" stroke="#e8e8e8" stroke-width="1.600"/><path d="M3.500 4.500h9v7h-9z" fill="#cfcfcf"/><path d="M6 6.500h4v3H6z" fill="#6c6c6c"/></svg>
<svg class="abs" style="left:738.300px;top:481.300px" width="8" height="8" viewBox="0 0 16 16"><path d="M1.500 1.500h5v5h-5z M9.500 1.500h5v5h-5z M1.500 9.500h5v5h-5z M9.500 9.500h5v5h-5z" fill="none" stroke="#e0e0e0" stroke-width="1.500"/></svg>
<svg class="abs" style="left:759.100px;top:481.300px" width="8.500" height="8" viewBox="0 0 17 16"><path d="M1 2h15v11H9.500L8.500 15 7.500 13H1z M8.500 2v11" fill="none" stroke="#e0e0e0" stroke-width="1.500"/><path d="M3 5h3.500M3 7.500h3.500M3 10h3.500M10.500 5H14M10.500 7.500H14M10.500 10H14" stroke="#e0e0e0" stroke-width="1"/></svg>
<svg class="abs" style="left:780.500px;top:481.100px" width="8" height="8.500" viewBox="0 0 16 17"><path d="M1 1.500h14 M2.500 1.500v7h11v-7 M8 8.500v5 M4.500 15.500h7" fill="none" stroke="#e0e0e0" stroke-width="1.600"/><path d="M6 3.500h4v3H6z" fill="#e0e0e0"/></svg>
<div class="abs" style="left:799px;top:485px;width:3.500px;height:.9px;background:#cfcfcf"></div>
<div class="abs" style="left:806px;top:485px;width:12px;height:.9px;background:#9a9a9a"></div>

</div>

</div>

<!-- self view tile -->
<div id="tile" class="abs">
  <div class="abs" style="left:126.5px;top:8px;width:17px;height:17px;border-radius:50%;background:#3a3c3d"></div>
  <svg class="abs" style="left:129.5px;top:11px" width="11" height="11" viewBox="0 0 24 24"><path fill="#e8eaed" d="M19 11h-1.700c0 .740-.160 1.430-.430 2.050l1.230 1.230c.560-.980.900-2.090.900-3.280zm-4.020.170c0-.060.020-.110.020-.170V5c0-1.660-1.340-3-3-3S9 3.340 9 5v.180l5.980 5.990zM4.270 3L3 4.270l6.010 6.010V11c0 1.660 1.330 3 2.990 3 .220 0 .440-.030.650-.080l1.660 1.660c-.710.330-1.500.520-2.310.520-2.760 0-5.300-2.100-5.300-5.100H5c0 3.410 2.720 6.230 6 6.720V21h2v-3.280c.910-.130 1.770-.450 2.540-.900L19.730 21 21 19.730 4.270 3z"/></svg>
  <svg class="abs" style="left:53.100px;top:19.600px" width="45.600" height="45.600" viewBox="0 0 46 46"><defs><clipPath id="av"><circle cx="23" cy="23" r="23"/></clipPath><filter id="bl" x="-10%" y="-10%" width="120%" height="120%"><feGaussianBlur stdDeviation=".8"/></filter><radialGradient id="hg" cx=".28" cy=".45" r=".75"><stop offset="0" stop-color="#9a5a3c"/><stop offset=".45" stop-color="#6b3a26"/><stop offset="1" stop-color="#33201a"/></radialGradient><linearGradient id="fg" x1="0" x2="1"><stop offset="0" stop-color="#cf9f8c"/><stop offset=".45" stop-color="#e2bba9"/><stop offset="1" stop-color="#c08f7c"/></linearGradient></defs>
<g clip-path="url(#av)"><rect width="46" height="46" fill="#2a1c18"/><g filter="url(#bl)">
<path d="M-2 -2h30L-2 32z" fill="#171b25"/><path d="M3 15l9-9 1.200 1.500-9 9z" fill="#a9bbd6" opacity=".8"/><path d="M2 20l4-4 1 1-4 4z" fill="#8da0bd" opacity=".6"/>
<ellipse cx="25" cy="24" rx="19.500" ry="20.500" fill="url(#hg)"/>
<path d="M4 21c-2 6 1 12 5 14 2-5 4-10 3-16z" fill="#965838"/>
<path d="M0 31c2 8 9 14 19 16V33c-4 3-11 3-15-2z" fill="#231611"/>
<path d="M36 22c5 4 7 12 3 19l-8 5V32z" fill="#3c2018"/>
<path d="M19.500 34h13v13h-13z" fill="#cf9f8b"/>
<ellipse cx="25.300" cy="21.500" rx="11.200" ry="16" fill="url(#fg)"/>
<path d="M12.500 26c-1-14 6-21 13.500-21 6.500 0 11 4.500 11.500 13-3-6-7-9-11.500-9.500-5 2.500-8 8-9.500 17-1.500 2-3.500 2-4 .5z" fill="#5c2f1f"/>
<path d="M18.500 18.300c1.300-1 3.300-1 4.600-.2M27.900 18.100c1.300-.8 3.300-.8 4.600.2" stroke="#4a2a20" stroke-width="1.100" fill="none"/>
<ellipse cx="21" cy="20.600" rx="1.900" ry="1" fill="#2f201c"/><ellipse cx="30.200" cy="20.600" rx="1.900" ry="1" fill="#2f201c"/>
<path d="M25.200 22v6l2.200.3" stroke="#bd8775" stroke-width="1" fill="none"/>
<ellipse cx="19.500" cy="27" rx="2.500" ry="1.800" fill="#d9a08f" opacity=".7"/><ellipse cx="31.500" cy="27" rx="2.300" ry="1.800" fill="#cf9482" opacity=".7"/>
<path d="M22 32c1.700-1.100 5-1.100 6.800 0-1.700 1.900-5.100 1.900-6.800 0z" fill="#ab5654"/>
<path d="M26 47c1-3 4-4.500 8-4.500s6 1.500 7 4.500z" fill="#8f8c8c"/>
</g></g></svg>

  <div class="abs nm" style="letter-spacing:-0.066px">Júlia Silveira</div>
</div>

<!-- bottom bar -->
<div id="clock" class="abs"><span class="abs" style="left:0;top:0;letter-spacing:-0.023px">00:13</span><span class="abs" style="left:33.4px;top:5px;width:1px;height:10.5px;background:#5f6368"></span><span class="abs" style="left:42.4px;top:0;letter-spacing:0.411px">one-idwf-zsn</span></div>
<div class="grp" style="left:312.5px;width:57px">
  <svg class="abs" style="left:7.9px;top:9.1px" width="14" height="14" viewBox="0 0 24 24"><path fill="#f9dedc" stroke="#f9dedc" stroke-width=".6" d="M7.410 15.410L12 10.830l4.590 4.580L18 14l-6-6-6 6z"/></svg>
  <div class="on"><svg class="abs" style="left:8.2px;top:8.2px" width="15" height="15" viewBox="0 0 24 24"><path fill="#601410" stroke="#601410" stroke-width=".5" d="M19 11h-1.700c0 .740-.160 1.430-.430 2.050l1.230 1.230c.560-.980.900-2.090.900-3.280zm-4.020.170c0-.060.020-.110.020-.170V5c0-1.660-1.340-3-3-3S9 3.340 9 5v.180l5.980 5.990zM4.270 3L3 4.270l6.010 6.010V11c0 1.660 1.330 3 2.990 3 .220 0 .440-.030.650-.080l1.660 1.660c-.710.330-1.500.520-2.310.520-2.760 0-5.300-2.100-5.300-5.100H5c0 3.410 2.720 6.230 6 6.720V21h2v-3.280c.910-.130 1.770-.450 2.540-.900L19.730 21 21 19.730 4.270 3z"/></svg></div>
</div>
<div class="grp" style="left:374.5px;width:57px">
  <svg class="abs" style="left:7.9px;top:9.1px" width="14" height="14" viewBox="0 0 24 24"><path fill="#f9dedc" stroke="#f9dedc" stroke-width=".6" d="M7.410 15.410L12 10.830l4.590 4.580L18 14l-6-6-6 6z"/></svg>
  <div class="on"><svg class="abs" style="left:7.9px;top:7.9px" width="15.6" height="15.6" viewBox="0 0 24 24"><path fill="#601410" stroke="#601410" stroke-width=".5" d="M9.560 8l-2-2-4.150-4.140L2 3.270 4.730 6H4c-.550 0-1 .450-1 1v10c0 .550.450 1 1 1h12c.210 0 .390-.080.550-.180L19.730 21l1.410-1.410-8.860-8.860L9.560 8zM5 16V8h1.730l8 8H5zm10-8v2.610l6 6V6.500l-4 4V7c0-.550-.450-1-1-1h-5.610l2 2H15z"/></svg></div>
</div>
<div class="pill" style="left:436px;width:36px"><svg style="margin:-7.7px 0 0 -7.7px" width="15.4" height="15.4" viewBox="0 0 24 24"><path fill="#e8eaed" stroke="#e8eaed" stroke-width=".4" d="M19 4H5c-1.110 0-2 .9-2 2v12c0 1.100.890 2 2 2h14c1.100 0 2-.9 2-2V6c0-1.100-.9-2-2-2zm0 14H5V6h14v12zM7 15h3c.550 0 1-.450 1-1v-1H9.500v.5h-2v-3h2v.5H11v-1c0-.550-.450-1-1-1H7c-.550 0-1 .450-1 1v4c0 .550.450 1 1 1zm7 0h3c.550 0 1-.450 1-1v-1h-1.500v.5h-2v-3h2v.5H18v-1c0-.550-.450-1-1-1h-3c-.550 0-1 .450-1 1v4c0 .550.450 1 1 1z"/></svg></div>
<div class="pill" style="left:477px;width:36px"><svg style="margin:-8.3px 0 0 -8.3px" width="16.6" height="16.6" viewBox="0 0 24 24"><path fill="#e8eaed" stroke="#e8eaed" stroke-width=".4" d="M11.990 2C6.470 2 2 6.480 2 12s4.470 10 9.990 10C17.520 22 22 17.520 22 12S17.520 2 11.990 2zM12 20c-4.420 0-8-3.580-8-8s3.580-8 8-8 8 3.580 8 8-3.580 8-8 8zm3.500-9c.830 0 1.500-.670 1.500-1.500S16.330 8 15.500 8 14 8.670 14 9.500s.670 1.500 1.500 1.500zm-7 0c.830 0 1.500-.670 1.500-1.500S9.330 8 8.500 8 7 8.670 7 9.500 7.670 11 8.500 11zm3.500 6.500c2.330 0 4.310-1.460 5.110-3.500H6.890c.8 2.040 2.780 3.500 5.110 3.500z"/></svg></div>
<div class="pill" style="left:518px;width:36.5px;background:#a8c7fa;border-radius:7px"><svg style="margin:-8.2px 0 0 -8.7px" width="17.4" height="16.4" viewBox="0 0 24 24" preserveAspectRatio="none"><path fill="#062e6f" stroke="#062e6f" stroke-width=".4" d="M21 3H3c-1.110 0-2 .890-2 2v14c0 1.110.890 2 2 2h18c1.110 0 2-.890 2-2V5c0-1.110-.890-2-2-2zm0 16.020H3V4.980h18v14.040zM10 12H8l4-4 4 4h-2v4h-4v-4z"/></svg></div>
<div class="pill" style="left:559.5px;width:36.5px"><svg style="margin:-9.2px 0 0 -8.3px" width="17" height="18" viewBox="0 0 24 24"><path fill="none" stroke="#e8eaed" stroke-width="2.1" stroke-linejoin="round" stroke-linecap="round" d="M7 11.500V5.200a1.400 1.400 0 0 1 2.800 0V10.500 3.800a1.400 1.400 0 0 1 2.800 0V10.500 4.600a1.400 1.400 0 0 1 2.800 0V11 7.200a1.400 1.400 0 0 1 2.800 0V15.500c0 3.600-2.800 6.500-6.400 6.500-2.600 0-4.400-1.200-5.600-3.200L3.300 13.600c-.5-.9.600-1.900 1.500-1.300L7 14z"/></svg></div>
<div class="pill" style="left:600px;width:24px"><svg style="margin:-8.5px 0 0 -8.5px" width="17" height="17" viewBox="0 0 24 24"><path fill="#e8eaed" d="M12 8c1.100 0 2-.9 2-2s-.9-2-2-2-2 .9-2 2 .9 2 2 2zm0 2c-1.100 0-2 .9-2 2s.9 2 2 2 2-.9 2-2-.9-2-2-2zm0 6c-1.100 0-2 .9-2 2s.9 2 2 2 2-.9 2-2-.9-2-2-2z"/></svg></div>
<div class="pill" style="left:629px;width:47px;background:#dc362e"><svg style="margin:-7.5px 0 0 -7.5px" width="15" height="15" viewBox="0 0 24 24"><path fill="#fff" d="M12 9c-1.600 0-3.150.250-4.600.720v3.100c0 .390-.230.740-.560.900-.980.490-1.870 1.120-2.660 1.850-.180.180-.430.280-.7.280-.280 0-.530-.110-.710-.290L.290 13.080c-.180-.170-.290-.420-.290-.7 0-.280.110-.530.290-.710C3.340 8.780 7.460 7 12 7s8.660 1.780 11.710 4.670c.180.180.290.430.290.710 0 .280-.110.530-.290.710l-2.480 2.480c-.180.180-.430.290-.710.290-.270 0-.520-.110-.7-.280-.790-.740-1.690-1.360-2.670-1.850-.330-.160-.560-.5-.560-.9v-3.100C15.150 9.250 13.600 9 12 9z"/></svg></div>
<!-- right icons -->
<svg class="abs" style="left:832.7px;top:522px" width="16" height="16" viewBox="0 0 24 24"><path fill="#e8eaed" stroke="#e8eaed" stroke-width=".45" d="M11 7h2v2h-2zm0 4h2v6h-2zm1-9C6.480 2 2 6.480 2 12s4.480 10 10 10 10-4.480 10-10S17.520 2 12 2zm0 18c-4.410 0-8-3.590-8-8s3.590-8 8-8 8 3.590 8 8-3.590 8-8 8z"/></svg>
<svg class="abs" style="left:863px;top:521.3px" width="17.5" height="17.5" viewBox="0 0 24 24"><path fill="#e8eaed" stroke="#e8eaed" stroke-width=".45" d="M9 13.750c-2.340 0-7 1.170-7 3.500V19h14v-1.750c0-2.330-4.660-3.500-7-3.500zM4.340 17c.840-.580 2.870-1.250 4.660-1.250s3.820.670 4.660 1.250H4.340zM9 12c1.930 0 3.500-1.570 3.500-3.500S10.930 5 9 5 5.500 6.570 5.500 8.500 7.070 12 9 12zm0-5c.830 0 1.500.670 1.500 1.500S9.830 10 9 10s-1.500-.670-1.500-1.500S8.170 7 9 7zm7.040 6.810c1.160.840 1.960 1.960 1.960 3.440V19h4v-1.750c0-2.020-3.500-3.170-5.960-3.440zM15 12c1.930 0 3.500-1.570 3.500-3.500S16.930 5 15 5c-.540 0-1.040.130-1.500.350.630.890 1 1.980 1 3.150s-.370 2.260-1 3.150c.460.220.960.350 1.500.350z"/></svg>
<div class="abs" style="left:872.2px;top:509.3px;width:13px;height:13px;border-radius:50%;background:#5f6368;color:#fff;font-size:7.5px;font-weight:bold;line-height:13px;text-align:center">2</div>
<svg class="abs" style="left:894.3px;top:522px" width="16" height="16" viewBox="0 0 24 24"><path fill="#e8eaed" stroke="#e8eaed" stroke-width=".45" d="M4 4h16v12H5.170L4 17.170V4m0-2c-1.100 0-1.990.9-1.990 2L2 22l4-4h14c1.100 0 2-.9 2-2V4c0-1.100-.9-2-2-2H4zm2 10h8v2H6v-2zm0-3h12v2H6V9zm0-3h12v2H6V6z"/></svg>
<svg class="abs" style="left:925px;top:521.7px" width="16" height="16" viewBox="0 0 24 24"><path fill="#e8eaed" stroke="#e8eaed" stroke-width=".45" d="M12 2l-5.500 9h11L12 2zm0 3.840L13.930 9h-3.870L12 5.840zM17.500 13c-2.490 0-4.500 2.010-4.500 4.500s2.010 4.500 4.500 4.500 4.500-2.010 4.500-4.500-2.010-4.500-4.500-4.500zm0 7c-1.380 0-2.500-1.120-2.500-2.500s1.120-2.500 2.500-2.500 2.500 1.120 2.500 2.500-1.120 2.500-2.500 2.500zM3 21.500h8v-8H3v8zm2-6h4v4H5v-4z"/></svg>
<svg class="abs" style="left:956px;top:521.5px" width="16.5" height="16.5" viewBox="0 0 24 24"><path fill="#e8eaed" stroke="#e8eaed" stroke-width=".45" d="M18 8h-1V6c0-2.760-2.240-5-5-5S7 3.240 7 6v2H6c-1.100 0-2 .9-2 2v10c0 1.100.9 2 2 2h7v-2H6V10h12v3h2v-3c0-1.100-.9-2-2-2zM9 6c0-1.660 1.340-3 3-3s3 1.340 3 3v2H9V6z"/><circle cx="18.500" cy="18.500" r="4.800" fill="#e8eaed"/><circle cx="18.500" cy="17" r="1.300" fill="#202124"/><path d="M16 20.800c.5-1.200 4.500-1.200 5 0z" fill="#202124"/></svg>


<!-- black strip on the right -->
<div class="abs" style="left:987px;top:0;width:13px;height:556px;background:#000"></div>
</div>
</body>
</html>
